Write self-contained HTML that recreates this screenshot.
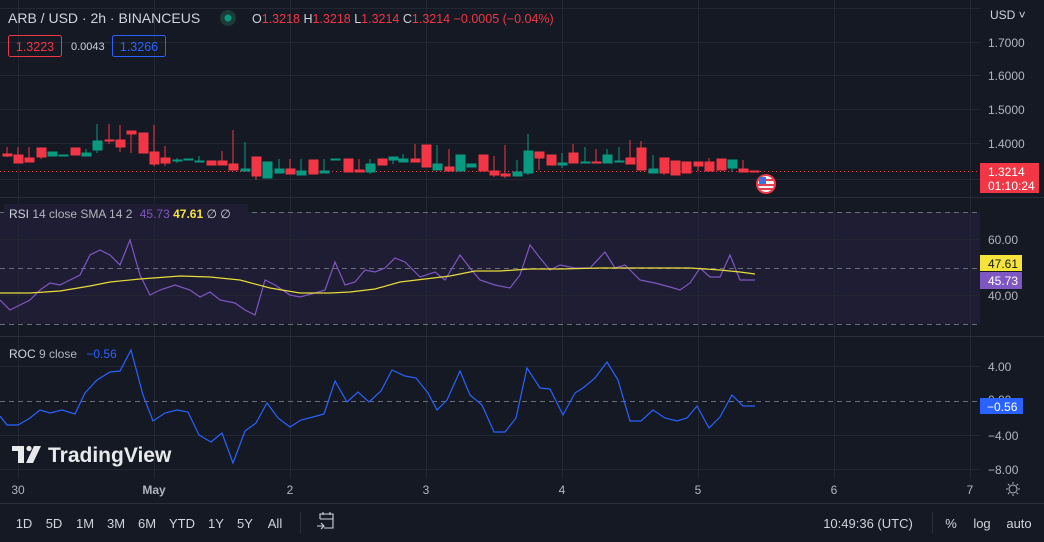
<!DOCTYPE html>
<html><head><meta charset="utf-8">
<style>
html,body{margin:0;padding:0;background:#151924;width:1044px;height:542px;overflow:hidden;font-family:"Liberation Sans",sans-serif;}
svg{position:absolute;left:0;top:0}
.t{font-family:"Liberation Sans",sans-serif}
</style></head><body>
<svg width="1044" height="542" viewBox="0 0 1044 542" xmlns="http://www.w3.org/2000/svg">
<rect width="1044" height="542" fill="#151924"/>
<!-- RSI band -->
<rect x="0" y="212" width="980" height="112" fill="#1f1d33"/>
<!-- vertical grid -->
<g stroke="#232733" stroke-width="1">
<line x1="18.5" y1="0" x2="18.5" y2="478"/><line x1="154.5" y1="0" x2="154.5" y2="478"/>
<line x1="290.5" y1="0" x2="290.5" y2="478"/><line x1="426.5" y1="0" x2="426.5" y2="478"/>
<line x1="562.5" y1="0" x2="562.5" y2="478"/><line x1="698.5" y1="0" x2="698.5" y2="478"/>
<line x1="834.5" y1="0" x2="834.5" y2="478"/><line x1="970.5" y1="0" x2="970.5" y2="478"/>
<line x1="0" y1="8.5" x2="980" y2="8.5"/><line x1="0" y1="42.5" x2="980" y2="42.5"/>
<line x1="0" y1="75.5" x2="980" y2="75.5"/><line x1="0" y1="109.5" x2="980" y2="109.5"/>
<line x1="0" y1="143.5" x2="980" y2="143.5"/><line x1="0" y1="179.5" x2="980" y2="179.5"/>
<line x1="0" y1="239.5" x2="980" y2="239.5"/><line x1="0" y1="295.5" x2="980" y2="295.5"/>
<line x1="0" y1="366.5" x2="980" y2="366.5"/><line x1="0" y1="435.5" x2="980" y2="435.5"/><line x1="0" y1="469.5" x2="980" y2="469.5"/>
</g>
<!-- pane separators -->
<g stroke="#2a2e39" stroke-width="1">
<line x1="0" y1="197.5" x2="1044" y2="197.5"/><line x1="0" y1="336.5" x2="1044" y2="336.5"/>
<line x1="0" y1="503.5" x2="1044" y2="503.5"/>
</g>
<!-- dashed lines -->
<g stroke="#6a6d78" stroke-width="1" stroke-dasharray="5,4">
<line x1="0" y1="212.5" x2="980" y2="212.5"/><line x1="0" y1="268.5" x2="980" y2="268.5"/>
<line x1="0" y1="324.5" x2="980" y2="324.5"/><line x1="0" y1="401.5" x2="980" y2="401.5"/>
</g>
<line x1="0" y1="171.5" x2="980" y2="171.5" stroke="#f23645" stroke-width="1" stroke-dasharray="1,3"/>
<!-- candles -->
<g stroke-width="1">
<g stroke="#f23645" fill="#f23645">
<line x1="7" y1="147" x2="7" y2="157"/><rect x="3" y="154" width="9" height="2"/>
<line x1="18" y1="147" x2="18" y2="163"/><rect x="14" y="155" width="9" height="8"/>
<line x1="29" y1="147" x2="29" y2="162"/><rect x="25" y="158" width="9" height="4"/>
<line x1="41" y1="148" x2="41" y2="159"/><rect x="37" y="148" width="9" height="9"/>
<rect x="71" y="148" width="9" height="7"/>
<line x1="109" y1="124" x2="109" y2="144"/><rect x="105" y="140" width="9" height="1"/>
<line x1="120" y1="125" x2="120" y2="152"/><rect x="116" y="140" width="9" height="7"/>
<line x1="131" y1="131" x2="131" y2="153"/><rect x="127" y="131" width="9" height="3"/>
<rect x="139" y="133" width="9" height="20"/>
<line x1="154" y1="125" x2="154" y2="166"/><rect x="150" y="152" width="9" height="12"/>
<line x1="165" y1="146" x2="165" y2="166"/><rect x="161" y="158" width="9" height="5"/>
<rect x="207" y="161" width="9" height="4"/>
<line x1="222" y1="151" x2="222" y2="165"/><rect x="218" y="161" width="9" height="4"/>
<line x1="233" y1="130" x2="233" y2="170"/><rect x="229" y="164" width="9" height="6"/>
<line x1="256" y1="157" x2="256" y2="180"/><rect x="252" y="157" width="9" height="19"/>
<line x1="290" y1="159" x2="290" y2="174"/><rect x="286" y="169" width="9" height="5"/>
<rect x="309" y="160" width="9" height="14"/>
<rect x="344" y="159" width="9" height="13"/>
<line x1="359" y1="159" x2="359" y2="172"/><rect x="355" y="170" width="9" height="2"/>
<rect x="378" y="159" width="9" height="6"/>
<line x1="415" y1="144" x2="415" y2="162"/><rect x="411" y="159" width="9" height="3"/>
<rect x="422" y="145" width="9" height="22"/>
<line x1="449" y1="149" x2="449" y2="171"/><rect x="445" y="167" width="9" height="4"/>
<rect x="479" y="155" width="9" height="16"/>
<line x1="494" y1="156" x2="494" y2="177"/><rect x="490" y="171" width="9" height="4"/>
<line x1="505" y1="145" x2="505" y2="178"/><rect x="501" y="174" width="9" height="2"/>
<line x1="539" y1="152" x2="539" y2="170"/><rect x="535" y="152" width="9" height="6"/>
<rect x="547" y="155" width="9" height="10"/>
<line x1="573" y1="144" x2="573" y2="163"/><rect x="569" y="153" width="9" height="10"/>
<line x1="596" y1="149" x2="596" y2="163"/><rect x="592" y="162" width="9" height="1"/>
<line x1="630" y1="140" x2="630" y2="164"/><rect x="626" y="158" width="9" height="6"/>
<line x1="641" y1="141" x2="641" y2="170"/><rect x="637" y="148" width="9" height="22"/>
<line x1="664" y1="158" x2="664" y2="175"/><rect x="660" y="158" width="9" height="15"/>
<rect x="671" y="161" width="9" height="14"/>
<rect x="682" y="162" width="9" height="11"/>
<line x1="698" y1="162" x2="698" y2="171"/><rect x="694" y="162" width="9" height="4"/>
<line x1="709" y1="158" x2="709" y2="171"/><rect x="705" y="162" width="9" height="9"/>
<rect x="717" y="159" width="9" height="11"/>
<line x1="743" y1="160" x2="743" y2="172"/><rect x="739" y="169" width="9" height="3"/>
<rect x="750" y="171" width="9" height="1"/>
</g>
<g stroke="#089981" fill="#089981">
<rect x="48" y="152" width="9" height="4"/>
<rect x="59" y="155" width="9" height="1"/>
<line x1="86" y1="149" x2="86" y2="156"/><rect x="82" y="153" width="9" height="3"/>
<line x1="97" y1="124" x2="97" y2="153"/><rect x="93" y="141" width="9" height="9"/>
<line x1="177" y1="158" x2="177" y2="163"/><rect x="173" y="160" width="9" height="1"/>
<rect x="184" y="159" width="9" height="1"/>
<line x1="199" y1="156" x2="199" y2="161"/><rect x="195" y="161" width="9" height="1"/>
<line x1="245" y1="142" x2="245" y2="171"/><rect x="241" y="169" width="9" height="2"/>
<rect x="263" y="162" width="9" height="16"/>
<line x1="279" y1="159" x2="279" y2="173"/><rect x="275" y="169" width="9" height="4"/>
<line x1="301" y1="159" x2="301" y2="175"/><rect x="297" y="171" width="9" height="4"/>
<line x1="324" y1="159" x2="324" y2="173"/><rect x="320" y="171" width="9" height="2"/>
<rect x="331" y="159" width="9" height="1"/>
<line x1="370" y1="159" x2="370" y2="174"/><rect x="366" y="164" width="9" height="8"/>
<line x1="393" y1="157" x2="393" y2="164"/><rect x="389" y="157" width="9" height="3"/>
<line x1="403" y1="154" x2="403" y2="162"/><rect x="399" y="159" width="9" height="3"/>
<line x1="437" y1="145" x2="437" y2="170"/><rect x="433" y="164" width="9" height="6"/>
<rect x="456" y="155" width="9" height="16"/>
<rect x="467" y="164" width="9" height="3"/>
<line x1="517" y1="160" x2="517" y2="176"/><rect x="513" y="172" width="9" height="4"/>
<line x1="528" y1="134" x2="528" y2="175"/><rect x="524" y="151" width="9" height="22"/>
<line x1="562" y1="153" x2="562" y2="168"/><rect x="558" y="163" width="9" height="2"/>
<line x1="585" y1="147" x2="585" y2="163"/><rect x="581" y="162" width="9" height="1"/>
<line x1="607" y1="149" x2="607" y2="163"/><rect x="603" y="155" width="9" height="8"/>
<line x1="619" y1="147" x2="619" y2="161"/><rect x="615" y="161" width="9" height="1"/>
<line x1="653" y1="155" x2="653" y2="173"/><rect x="649" y="169" width="9" height="4"/>
<line x1="732" y1="160" x2="732" y2="172"/><rect x="728" y="160" width="9" height="8"/>
</g>
</g>
<!-- flag -->
<circle cx="766" cy="184" r="10" fill="#f23645"/><circle cx="766" cy="184" r="8" fill="#f5f5f5"/>
<rect x="758" y="179" width="16" height="2" fill="#e04050"/><rect x="758" y="184" width="16" height="2" fill="#e04050"/><rect x="759" y="188" width="14" height="2" fill="#e04050"/>
<rect x="759" y="177" width="7" height="7" fill="#3d6fe0"/>
<!-- RSI lines -->
<polyline fill="none" stroke="#7e57c2" stroke-width="1.2" points="0,300 10,310 20,305 30,300 40,290 50,283 60,285 70,280 80,275 90,255 100,250 110,255 120,265 130,240 140,275 150,295 160,290 175,285 190,290 200,297 210,292 220,300 235,303 245,310 255,315 265,280 275,285 290,295 300,297 315,293 325,290 335,262 345,285 355,282 365,270 375,272 385,268 395,258 405,262 420,277 435,272 445,280 460,255 470,268 480,280 495,285 510,288 520,275 530,245 540,258 550,270 560,265 575,268 590,268 605,252 615,268 625,265 640,280 655,283 670,287 680,290 690,283 700,268 710,277 720,277 730,255 740,280 755,280"/>
<polyline fill="none" stroke="#e8dc3a" stroke-width="1.2" points="0,293 30,293 60,291 90,286 110,282 140,279 180,276 210,277 240,280 270,288 300,293 330,293 350,292 375,289 400,282 425,279 450,276 475,271 500,271 530,269 560,269 600,268 650,268 690,268 720,270 740,272 755,274"/>
<!-- ROC line -->
<polyline fill="none" stroke="#2962ff" stroke-width="1.2" points="0,416 7,425 18,425 30,418 40,410 50,413 62,410 75,414 85,393 97,380 110,372 120,371 131,350 143,395 153,421 165,413 177,410 188,412 199,435 211,442 222,433 233,463 245,431 256,423 267,403 278,418 290,427 301,420 313,417 324,414 335,381 347,402 358,392 369,402 381,391 392,370 405,376 416,378 428,393 437,410 447,400 460,371 470,395 482,405 494,432 505,432 516,418 527,368 540,388 550,389 563,415 575,393 583,388 595,378 607,362 618,380 630,421 641,421 653,410 665,418 677,421 687,418 697,406 709,428 720,417 732,395 743,406 755,406"/>
<!-- TV logo -->
<g fill="#e8e9ec">
<rect x="12" y="446" width="12" height="5"/><rect x="18" y="446" width="6" height="17"/>
<circle cx="29" cy="448.5" r="2.6"/>
<polygon points="34,446 41,446 33,463 26,463"/>
</g>
<text x="48" y="462" class="t" font-size="21" font-weight="bold" fill="#e8e9ec">TradingView</text>
<!-- header -->
<text x="8" y="23" class="t" font-size="14" fill="#d1d4dc">ARB / USD · 2h · BINANCEUS</text>
<circle cx="228" cy="18" r="8" fill="#1c3a36"/><circle cx="228" cy="18" r="3.5" fill="#089981"/>
<text x="252" y="23" class="t" font-size="12.5" fill="#f23645"><tspan fill="#d1d4dc">O</tspan>1.3218 <tspan fill="#d1d4dc">H</tspan>1.3218 <tspan fill="#d1d4dc">L</tspan>1.3214 <tspan fill="#d1d4dc">C</tspan>1.3214 −0.0005 (−0.04%)</text>
<rect x="8.5" y="35.5" width="53" height="21" rx="2" fill="none" stroke="#f23645"/>
<text x="35" y="51" class="t" font-size="12.5" fill="#f23645" text-anchor="middle">1.3223</text>
<text x="71" y="50" class="t" font-size="11" fill="#d1d4dc">0.0043</text>
<rect x="112.5" y="35.5" width="53" height="21" rx="2" fill="none" stroke="#2962ff"/>
<text x="139" y="51" class="t" font-size="12.5" fill="#2962ff" text-anchor="middle">1.3266</text>
<!-- RSI label -->
<rect x="4" y="204" width="244" height="18" fill="#1f1d33"/>
<text x="9" y="218" class="t" font-size="12" fill="#b2b5be"><tspan fill="#d1d4dc">RSI</tspan> 14 close SMA 14 2 <tspan dx="4" fill="#7e57c2">45.73</tspan> <tspan fill="#f7e43a" font-weight="bold">47.61</tspan> <tspan fill="#d1d4dc">∅ ∅</tspan></text>
<text x="9" y="358" class="t" font-size="12" fill="#b2b5be"><tspan fill="#d1d4dc">ROC</tspan> 9 close <tspan dx="6" fill="#2962ff">−0.56</tspan></text>
<!-- right axis -->
<g class="t" font-size="12" fill="#b2b5be">
<text x="990" y="19" fill="#d1d4dc">USD ˅</text>
<text x="988" y="47">1.7000</text><text x="988" y="80">1.6000</text><text x="988" y="114">1.5000</text><text x="988" y="148">1.4000</text>
<text x="988" y="244">60.00</text><text x="988" y="300">40.00</text>
<text x="988" y="371">4.00</text><text x="988" y="404">0.00</text><text x="988" y="440">−4.00</text><text x="988" y="474">−8.00</text>
</g>
<rect x="980" y="163" width="59" height="30" fill="#f23645"/>
<text x="988" y="176" class="t" font-size="12" fill="#fff">1.3214</text>
<text x="988" y="190" class="t" font-size="12" fill="#fff">01:10:24</text>
<rect x="980" y="255" width="42" height="16" fill="#f7e43a"/><text x="988" y="268" class="t" font-size="12" fill="#131722">47.61</text>
<rect x="980" y="272" width="42" height="17" fill="#7e57c2"/><text x="988" y="285" class="t" font-size="12" fill="#fff">45.73</text>
<rect x="980" y="398" width="43" height="16" fill="#2962ff"/><text x="987" y="411" class="t" font-size="12" fill="#fff">−0.56</text>
<!-- time axis -->
<g class="t" font-size="12" fill="#b2b5be" text-anchor="middle">
<text x="18" y="494">30</text><text x="154" y="494" font-weight="bold">May</text><text x="290" y="494">2</text><text x="426" y="494">3</text>
<text x="562" y="494">4</text><text x="698" y="494">5</text><text x="834" y="494">6</text><text x="970" y="494">7</text>
</g>
<g stroke="#b2b5be" fill="none" stroke-width="1"><circle cx="1013" cy="489" r="4"/>
<path d="M1013 482v2M1013 494v2M1006 489h2M1018 489h2M1008 484l1.5 1.5M1016.5 492.5l1.5 1.5M1018 484l-1.5 1.5M1009.5 492.5l-1.5 1.5"/></g>
<!-- bottom toolbar -->
<g class="t" font-size="13" fill="#d1d4dc" text-anchor="middle">
<text x="24" y="528">1D</text><text x="54" y="528">5D</text><text x="85" y="528">1M</text><text x="116" y="528">3M</text><text x="147" y="528">6M</text>
<text x="182" y="528">YTD</text><text x="216" y="528">1Y</text><text x="245" y="528">5Y</text><text x="275" y="528">All</text>
<text x="868" y="528">10:49:36 (UTC)</text><text x="951" y="528">%</text><text x="982" y="528">log</text><text x="1019" y="528">auto</text>
</g>
<line x1="300.5" y1="512" x2="300.5" y2="533" stroke="#2a2e39"/>
<line x1="932.5" y1="512" x2="932.5" y2="533" stroke="#2a2e39"/>
<g stroke="#d1d4dc" fill="none" stroke-width="1.1">
<path d="M320 519v-5h13v14h-9M320 519h13M323 512v3M330 512v3M317 526h6M321 523l3 3-3 3"/>
</g>
</svg>
</body></html>
